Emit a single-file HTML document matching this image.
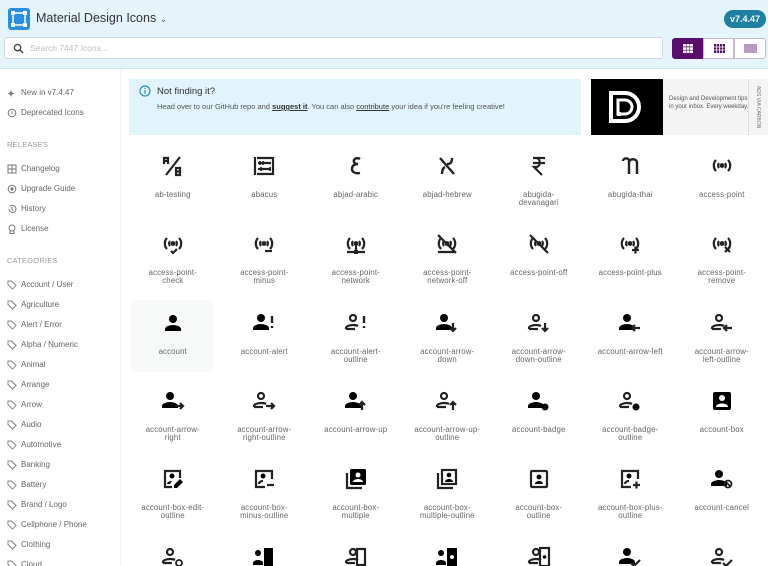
<!DOCTYPE html>
<html><head><meta charset="utf-8"><style>
*{box-sizing:border-box;margin:0;padding:0}
html,body{width:768px;height:566px;overflow:hidden}
body{background:#fff;font-family:"Liberation Sans",sans-serif;position:relative}
.hdr{position:absolute;left:0;top:0;width:768px;height:69px;background:#e5f3fa;border-bottom:1px solid #d3e4ee}
.logo{position:absolute;left:8px;top:8px;width:22px;height:22px;background:#2a8fe0;border-radius:3px}
.title{position:absolute;left:36px;top:11px;font-size:12.5px;color:#333}
.ver{position:absolute;left:724px;top:10px;width:42px;height:18px;border-radius:9px;background:#1f7fa3;color:#fff;font-size:9px;font-weight:bold;text-align:center;line-height:18px}
.search{position:absolute;left:4px;top:37px;width:659px;height:22px;background:#fff;border:1px solid #cfd8de;border-radius:3px}
.search span{position:absolute;left:25px;top:5px;font-size:8.5px;color:#b8bfc4}
.tg{position:absolute;top:38px;height:21px;width:31px;border:1px solid #c9b9cf}
.side{position:absolute;left:0;top:70px;width:121px;height:496px;background:#fff;border-right:1px solid #eef1f3}
.si{position:absolute;left:21px;font-size:8px;color:#666}
.si i{position:absolute;left:-14px;top:0;width:9px;height:9px;font-style:normal;font-size:8px;color:#888;line-height:9px}
.sh{position:absolute;left:7px;font-size:7.5px;color:#999;letter-spacing:.2px}
.banner{position:absolute;left:129px;top:79px;width:452px;height:56px;background:#e1f3fb}
.ad{position:absolute;left:591px;top:79px;width:177px;height:56px;background:#f4f4f4}
.grid{position:absolute;left:127px;top:148px;display:grid;grid-template-columns:repeat(7,91.5px);grid-auto-rows:78.3px}
.c{text-align:center;padding-top:6px}
.c svg{display:block;margin:0 auto;width:24px;height:24px}
.c div{margin:13px auto 0;width:66px;font-size:7.8px;line-height:8px;letter-spacing:.15px;color:#666;word-wrap:break-word}
.hl{position:absolute;left:131px;top:300px;width:82px;height:72px;background:#f7f9f9;border-radius:3px}
</style></head><body>
<svg width="0" height="0" style="position:absolute">
<defs>
<g id="p"><circle cx="9" cy="7" r="4"/><path d="M1 19v-2c0-2.6 5-4 8-4s8 1.4 8 4v2z"/></g>
<g id="po" fill="none" stroke="#222" stroke-width="2.2"><circle cx="9" cy="7" r="3"/><path d="M2 18v-1c0-2 4.5-3 7-3s4 .4 5 1"/><path d="M2 18h9"/></g>
<g id="ap" fill="none" stroke="#222" stroke-width="2.2"><path d="M6 6a8 8 0 0 0 0 11M18 6a8 8 0 0 1 0 11"/><path d="M9 9a4 4 0 0 0 0 5M15 9a4 4 0 0 1 0 5"/><circle cx="12" cy="11.5" r="1.3" fill="#222"/></g>
<g id="tag"><path d="M1 4.5V1h3.5L9 5.5 5.5 9z" fill="none" stroke="#888" stroke-width="1"/></g>
</defs></svg>
<div class="hdr">
<div class="logo"><svg width="22" height="22" viewBox="0 0 22 22"><rect x="5" y="5" width="12" height="12" fill="none" stroke="#fff" stroke-width="1.5"/><g fill="#fff"><rect x="3" y="3" width="4" height="4"/><rect x="15" y="3" width="4" height="4"/><rect x="3" y="15" width="4" height="4"/><rect x="15" y="15" width="4" height="4"/></g></svg></div>
<div class="title">Material Design Icons <span style="font-size:9px;color:#555">&#8964;</span></div>
<div class="ver">v7.4.47</div>
<div class="search"><svg style="position:absolute;left:8px;top:5px" width="11" height="11" viewBox="0 0 12 12"><circle cx="5" cy="5" r="3.5" fill="none" stroke="#444" stroke-width="1.5"/><path d="M7.5 7.5L11 11" stroke="#444" stroke-width="1.7"/></svg><span>Search 7447 Icons...</span></div>
<div class="tg" style="left:672px;background:#5b0c6f;border-color:#5b0c6f;border-radius:3px 0 0 3px"><svg style="position:absolute;left:10px;top:5px" width="10" height="9"><g fill="#fff"><rect x="0" y="0" width="3" height="2.5"/><rect x="3.5" y="0" width="3" height="2.5"/><rect x="7" y="0" width="3" height="2.5"/><rect x="0" y="3.3" width="3" height="2.5"/><rect x="3.5" y="3.3" width="3" height="2.5"/><rect x="7" y="3.3" width="3" height="2.5"/><rect x="0" y="6.5" width="3" height="2.5"/><rect x="3.5" y="6.5" width="3" height="2.5"/><rect x="7" y="6.5" width="3" height="2.5"/></g></svg></div>
<div class="tg" style="left:703px;background:#fff"><svg style="position:absolute;left:10px;top:5px" width="11" height="9"><g fill="#4a0c5c"><rect width="11" height="9"/></g><g stroke="#fff" stroke-width=".8"><path d="M2.7 0v9M5.5 0v9M8.3 0v9M0 3h11M0 6h11"/></g></svg></div>
<div class="tg" style="left:734px;width:32px;background:#fff;border-radius:0 3px 3px 0"><svg style="position:absolute;left:9px;top:5px" width="13" height="9"><rect width="13" height="9" fill="#b89ac4"/></svg></div>
</div>
<div class="side">
<div class="si" style="top:18px"><i><svg width="10" height="10" viewBox="0 0 10 10"><path d="M4 2l1 2.5 2.5 1-2.5 1L4 9 3 6.5.5 5.5 3 4.5z" fill="#777"/></svg></i>New in v7.4.47</div>
<div class="si" style="top:38px"><i><svg width="10" height="10"><circle cx="5" cy="5" r="3.8" fill="none" stroke="#777"/><path d="M5 3v2.5" stroke="#777"/></svg></i>Deprecated Icons</div>
<div class="sh" style="top:70px">RELEASES</div>
<div class="si" style="top:94px"><i><svg width="10" height="10"><rect x="1" y="1" width="8" height="8" fill="none" stroke="#777"/><path d="M1 5h8M5 1v8" stroke="#777"/></svg></i>Changelog</div>
<div class="si" style="top:114px"><i><svg width="10" height="10"><circle cx="5" cy="5" r="3.8" fill="none" stroke="#777"/><circle cx="5" cy="5" r="1.6" fill="#777"/></svg></i>Upgrade Guide</div>
<div class="si" style="top:134px"><i><svg width="10" height="10"><path d="M2 5a3.5 3.5 0 1 0 1-2.5" fill="none" stroke="#777"/><path d="M5 3v2.5l1.5 1" fill="none" stroke="#777"/></svg></i>History</div>
<div class="si" style="top:154px"><i><svg width="10" height="10"><circle cx="5" cy="4" r="3" fill="none" stroke="#777"/><path d="M3 7v2.5h4V7" fill="none" stroke="#777"/></svg></i>License</div>
<div class="sh" style="top:186px">CATEGORIES</div>
<div class="si" style="top:210px"><i><svg width="10" height="10"><use href="#tag"/></svg></i>Account / User</div>
<div class="si" style="top:230px"><i><svg width="10" height="10"><use href="#tag"/></svg></i>Agriculture</div>
<div class="si" style="top:250px"><i><svg width="10" height="10"><use href="#tag"/></svg></i>Alert / Error</div>
<div class="si" style="top:270px"><i><svg width="10" height="10"><use href="#tag"/></svg></i>Alpha / Numeric</div>
<div class="si" style="top:290px"><i><svg width="10" height="10"><use href="#tag"/></svg></i>Animal</div>
<div class="si" style="top:310px"><i><svg width="10" height="10"><use href="#tag"/></svg></i>Arrange</div>
<div class="si" style="top:330px"><i><svg width="10" height="10"><use href="#tag"/></svg></i>Arrow</div>
<div class="si" style="top:350px"><i><svg width="10" height="10"><use href="#tag"/></svg></i>Audio</div>
<div class="si" style="top:370px"><i><svg width="10" height="10"><use href="#tag"/></svg></i>Automotive</div>
<div class="si" style="top:390px"><i><svg width="10" height="10"><use href="#tag"/></svg></i>Banking</div>
<div class="si" style="top:410px"><i><svg width="10" height="10"><use href="#tag"/></svg></i>Battery</div>
<div class="si" style="top:430px"><i><svg width="10" height="10"><use href="#tag"/></svg></i>Brand / Logo</div>
<div class="si" style="top:450px"><i><svg width="10" height="10"><use href="#tag"/></svg></i>Cellphone / Phone</div>
<div class="si" style="top:470px"><i><svg width="10" height="10"><use href="#tag"/></svg></i>Clothing</div>
<div class="si" style="top:490px"><i><svg width="10" height="10"><use href="#tag"/></svg></i>Cloud</div>
</div>
<div class="banner">
<svg style="position:absolute;left:10px;top:6px" width="12" height="12"><circle cx="6" cy="6" r="5" fill="none" stroke="#2a8fc7" stroke-width="1.2"/><path d="M6 5v4M6 3v1" stroke="#2a8fc7" stroke-width="1.2"/></svg>
<div style="position:absolute;left:28px;top:7px;font-size:9.5px;color:#333">Not finding it?</div>
<div style="position:absolute;left:28px;top:23px;font-size:7.5px;color:#555">Head over to our GitHub repo and <u style="color:#333;font-weight:bold">suggest it</u>. You can also <u style="color:#333">contribute</u> your idea if you're feeling creative!</div>
</div>
<div class="ad">
<div style="position:absolute;left:0;top:0;width:72px;height:56px;background:#000"><svg style="position:absolute;left:17px;top:11px" width="38" height="34" viewBox="0 0 38 34"><path d="M3 3h14a14 14 0 0 1 0 28H3z" fill="none" stroke="#fff" stroke-width="4"/><path d="M10 10h7a7 7 0 0 1 0 14h-7z" fill="none" stroke="#fff" stroke-width="3"/><rect x="9" y="22" width="4" height="4" fill="#fff"/></svg></div>
<div style="position:absolute;left:78px;top:16px;width:80px;font-size:6px;line-height:8px;color:#555">Design and Development tips in your inbox. Every weekday.</div>
<div style="position:absolute;left:157px;top:0;width:20px;height:56px;border-left:1px solid #ddd;font-size:5px;color:#777;writing-mode:vertical-rl;text-align:center;line-height:20px">ADS VIA CARBON</div>
</div>
<div class="hl"></div>
<div class="grid">
<div class="c"><svg viewBox="0 0 24 24"><g fill="none" stroke="#222" stroke-width="2.2"><path d="M3 10V4h4v6M3 7h4M5 21L19 3M15 14h4v7h-4zM15 17.5h4"/></g></svg><div>ab-testing</div></div>
<div class="c"><svg viewBox="0 0 24 24"><g fill="none" stroke="#222" stroke-width="2.2"><path d="M3 3v18M21 3v18M5 4h16M5 20h16M6 9h13M6 15h13"/><path d="M8 7v4M11 7v4M9 13v4M18 13v4" stroke-width="1.6"/></g></svg><div>abacus</div></div>
<div class="c"><svg viewBox="0 0 24 24"><path d="M16 5c-3-2-7 0-6 3 .5 1.5 2 2 4 2-4 0-6 2-6 5 0 3 3 5 8 4" fill="none" stroke="#222" stroke-width="2.4"/></svg><div>abjad-arabic</div></div>
<div class="c"><svg viewBox="0 0 24 24"><path d="M5 4l14 16M17 4c0 4-1 6-5 6M7 20c0-4 1-6 3-7" fill="none" stroke="#222" stroke-width="2.4"/></svg><div>abjad-hebrew</div></div>
<div class="c"><svg viewBox="0 0 24 24"><path d="M6 4h12M6 9h12M9 4c5 0 5 9 0 9h-2l8 8" fill="none" stroke="#222" stroke-width="2.2"/></svg><div>abugida-devanagari</div></div>
<div class="c"><svg viewBox="0 0 24 24"><path d="M5 7c0-3 6-4 6 0v13M11 9c0-5 8-5 8 0v11" fill="none" stroke="#222" stroke-width="2.4"/></svg><div>abugida-thai</div></div>
<div class="c"><svg viewBox="0 0 24 24"><use href="#ap"/></svg><div>access-point</div></div>

<div class="c"><svg viewBox="0 0 24 24"><use href="#ap"/><path d="M10 19l2 2 4-4" fill="none" stroke="#222" stroke-width="2.2"/></svg><div>access-point-check</div></div>
<div class="c"><svg viewBox="0 0 24 24"><use href="#ap"/><path d="M13 19h7" stroke="#222" stroke-width="2.2"/></svg><div>access-point-minus</div></div>
<div class="c"><svg viewBox="0 0 24 24"><use href="#ap"/><path d="M12 12v7M3 20h18" stroke="#222" stroke-width="2.2"/><rect x="10" y="18" width="4" height="4" fill="#222"/></svg><div>access-point-network</div></div>
<div class="c"><svg viewBox="0 0 24 24"><use href="#ap"/><path d="M3 20h18M3 3l18 18" stroke="#222" stroke-width="2.2"/></svg><div>access-point-network-off</div></div>
<div class="c"><svg viewBox="0 0 24 24"><use href="#ap"/><path d="M3 3l18 18" stroke="#222" stroke-width="2.2"/></svg><div>access-point-off</div></div>
<div class="c"><svg viewBox="0 0 24 24"><use href="#ap"/><path d="M14 18h7M17.5 14.5v7" stroke="#222" stroke-width="2.2"/></svg><div>access-point-plus</div></div>
<div class="c"><svg viewBox="0 0 24 24"><use href="#ap"/><path d="M15 15l5 5M20 15l-5 5" stroke="#222" stroke-width="2.2"/></svg><div>access-point-remove</div></div>

<div class="c"><svg viewBox="0 0 24 24"><circle cx="12" cy="8" r="4"/><path d="M4 20v-2c0-2.6 5-4 8-4s8 1.4 8 4v2z"/></svg><div>account</div></div>
<div class="c"><svg viewBox="0 0 24 24"><use href="#p"/><path d="M20 5v7M20 15v2" stroke="#222" stroke-width="2.4"/></svg><div>account-alert</div></div>
<div class="c"><svg viewBox="0 0 24 24"><use href="#po"/><path d="M20 5v7M20 15v2" stroke="#222" stroke-width="2.4"/></svg><div>account-alert-outline</div></div>
<div class="c"><svg viewBox="0 0 24 24"><use href="#p"/><path d="M18 12v8M15 17l3 3 3-3" fill="none" stroke="#222" stroke-width="2.2"/></svg><div>account-arrow-down</div></div>
<div class="c"><svg viewBox="0 0 24 24"><use href="#po"/><path d="M18 12v8M15 17l3 3 3-3" fill="none" stroke="#222" stroke-width="2.2"/></svg><div>account-arrow-down-outline</div></div>
<div class="c"><svg viewBox="0 0 24 24"><use href="#p"/><path d="M14 17h8M17 14l-3 3 3 3" fill="none" stroke="#222" stroke-width="2.2"/></svg><div>account-arrow-left</div></div>
<div class="c"><svg viewBox="0 0 24 24"><use href="#po"/><path d="M14 17h8M17 14l-3 3 3 3" fill="none" stroke="#222" stroke-width="2.2"/></svg><div>account-arrow-left-outline</div></div>

<div class="c"><svg viewBox="0 0 24 24"><use href="#p"/><path d="M14 17h8M19 14l3 3-3 3" fill="none" stroke="#222" stroke-width="2.2"/></svg><div>account-arrow-right</div></div>
<div class="c"><svg viewBox="0 0 24 24"><use href="#po"/><path d="M14 17h8M19 14l3 3-3 3" fill="none" stroke="#222" stroke-width="2.2"/></svg><div>account-arrow-right-outline</div></div>
<div class="c"><svg viewBox="0 0 24 24"><use href="#p"/><path d="M18 21v-8M15 16l3-3 3 3" fill="none" stroke="#222" stroke-width="2.2"/></svg><div>account-arrow-up</div></div>
<div class="c"><svg viewBox="0 0 24 24"><use href="#po"/><path d="M18 21v-8M15 16l3-3 3 3" fill="none" stroke="#222" stroke-width="2.2"/></svg><div>account-arrow-up-outline</div></div>
<div class="c"><svg viewBox="0 0 24 24"><use href="#p"/><circle cx="18" cy="18" r="3.5"/></svg><div>account-badge</div></div>
<div class="c"><svg viewBox="0 0 24 24"><use href="#po"/><circle cx="18" cy="18" r="3.5"/></svg><div>account-badge-outline</div></div>
<div class="c"><svg viewBox="0 0 24 24"><rect x="3" y="3" width="18" height="18" rx="2"/><circle cx="12" cy="9" r="3" fill="#fff"/><path d="M6 18c0-2.5 3-3.5 6-3.5s6 1 6 3.5z" fill="#fff"/></svg><div>account-box</div></div>

<div class="c"><svg viewBox="0 0 24 24"><path d="M19 11V4H4v16h7" fill="none" stroke="#222" stroke-width="2.2"/><circle cx="11" cy="9" r="2.5"/><path d="M6 17c0-2 3-3 5-3l-2 3z"/><path d="M13 21v-3l6-6 3 3-6 6z"/></svg><div>account-box-edit-outline</div></div>
<div class="c"><svg viewBox="0 0 24 24"><path d="M20 12V4H4v16h9" fill="none" stroke="#222" stroke-width="2.2"/><circle cx="11" cy="9" r="2.5"/><path d="M7 17c0-2 2-3 4-3" fill="none" stroke="#222" stroke-width="2.2"/><path d="M15 18h7" stroke="#222" stroke-width="2.2"/></svg><div>account-box-minus-outline</div></div>
<div class="c"><svg viewBox="0 0 24 24"><path d="M3 6v15h15" fill="none" stroke="#222" stroke-width="2.2"/><rect x="6" y="2" width="16" height="16" rx="1.5"/><circle cx="14" cy="8" r="2.5" fill="#fff"/><path d="M9 15c0-2 3-3 5-3s5 1 5 3z" fill="#fff"/></svg><div>account-box-multiple</div></div>
<div class="c"><svg viewBox="0 0 24 24"><path d="M3 6v15h15" fill="none" stroke="#222" stroke-width="2.2"/><rect x="7" y="3" width="14" height="14" fill="none" stroke="#222" stroke-width="2.2"/><circle cx="14" cy="8" r="2.3"/><path d="M10 15c0-2 2-3 4-3s4 1 4 3z"/></svg><div>account-box-multiple-outline</div></div>
<div class="c"><svg viewBox="0 0 24 24"><rect x="4" y="4" width="16" height="16" rx="1" fill="none" stroke="#222" stroke-width="2.2"/><circle cx="12" cy="10" r="2.5"/><path d="M8 17c0-2 2-3 4-3s4 1 4 3z"/></svg><div>account-box-outline</div></div>
<div class="c"><svg viewBox="0 0 24 24"><path d="M20 12V4H4v16h9" fill="none" stroke="#222" stroke-width="2.2"/><circle cx="11" cy="9" r="2.5"/><path d="M7 17c0-2 2-3 4-3" fill="none" stroke="#222" stroke-width="2.2"/><path d="M15 18h7M18.5 14.5v7" stroke="#222" stroke-width="2.2"/></svg><div>account-box-plus-outline</div></div>
<div class="c"><svg viewBox="0 0 24 24"><use href="#p"/><circle cx="18" cy="17" r="3.5" fill="none" stroke="#222" stroke-width="1.8"/><path d="M15.5 14.5l5 5" stroke="#222" stroke-width="1.8"/></svg><div>account-cancel</div></div>

<div class="c"><svg viewBox="0 0 24 24"><use href="#po"/><circle cx="18" cy="18" r="3" fill="none" stroke="#222" stroke-width="1.8"/></svg><div>account-cancel-outline</div></div>
<div class="c"><svg viewBox="0 0 24 24"><circle cx="6" cy="8" r="3"/><path d="M1 20v-2c0-2 3-3 5-3s5 1 5 3v2z"/><rect x="12" y="3" width="9" height="18"/></svg><div>account-card</div></div>
<div class="c"><svg viewBox="0 0 24 24"><use href="#po"/><rect x="13" y="4" width="8" height="16" fill="none" stroke="#222" stroke-width="2.2"/></svg><div>account-card-outline</div></div>
<div class="c"><svg viewBox="0 0 24 24"><circle cx="6" cy="8" r="3"/><path d="M1 20v-2c0-2 3-3 5-3s5 1 5 3v2z"/><rect x="12" y="3" width="10" height="18"/><circle cx="17" cy="12" r="2" fill="#fff"/></svg><div>account-cash</div></div>
<div class="c"><svg viewBox="0 0 24 24"><use href="#po"/><rect x="13" y="3" width="9" height="18" fill="none" stroke="#222" stroke-width="2.2"/><circle cx="17.5" cy="12" r="1.8"/></svg><div>account-cash-outline</div></div>
<div class="c"><svg viewBox="0 0 24 24"><use href="#p"/><path d="M13 18l3 3 6-6" fill="none" stroke="#222" stroke-width="2.2"/></svg><div>account-check</div></div>
<div class="c"><svg viewBox="0 0 24 24"><use href="#po"/><path d="M13 18l3 3 6-6" fill="none" stroke="#222" stroke-width="2.2"/></svg><div>account-check-outline</div></div>
</div>
</body></html>
